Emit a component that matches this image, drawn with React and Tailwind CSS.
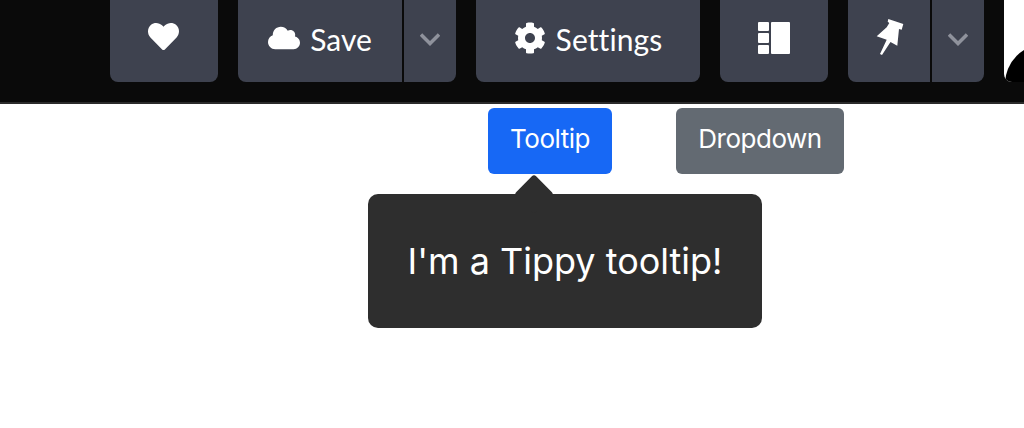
import React from "react";
import { FaHeart, FaCloud, FaCog } from "react-icons/fa";

const barBtn = "flex items-center justify-center h-full pb-1 bg-[#3e424f] text-white";

const Chevron = () => (
  <svg width="20" height="13" viewBox="0 0 20 13" fill="none" stroke="#8f929c" strokeWidth="3.5">
    <path d="M1 1.5 10 10.5 19 1.5" />
  </svg>
);

const PanelIcon = () => (
  <svg className="mb-[2px]" width="32" height="32" viewBox="0 0 32 32" fill="white">
    <rect x="0" y="0" width="11" height="9" rx="1" />
    <rect x="0" y="11" width="11" height="10" rx="1" />
    <rect x="0" y="23" width="11" height="9" rx="1" />
    <rect x="13" y="0" width="19" height="32" rx="1" />
  </svg>
);

const PinIcon = () => (
  <svg className="ml-[3px] mb-[4px]" width="30" height="40" viewBox="36 18 30 40" fill="white">
    <path d="M48.3 20 63.3 25 61.7 30.7 59 30 57.3 46.7 50.5 43 42 56 40 55 46.7 40.7 36.7 37.3 46.7 28.3 49.3 24 47.7 22.7Z" />
  </svg>
);

const App = () => {
  return (
    <div className="h-[428px] bg-white overflow-hidden font-['Lato',sans-serif]">
      <header className="flex h-[104px] bg-[#0a0a0a] border-b-2 border-[#2b2b2b] pb-5 pl-[110px] gap-5">
        <button className={`${barBtn} w-[108px] rounded-b-lg`}>
          <FaHeart className="text-[31px] mb-[5px] mr-[2px]" />
        </button>
        <div className="flex h-full w-[218px] rounded-b-lg overflow-hidden">
          <button className={`${barBtn} flex-1 gap-[10px] text-[30px]`}>
            <FaCloud className="text-[32px] mb-[2px]" />
            Save
          </button>
          <div className="w-[2px] bg-[#0a0a0a]" />
          <button className={`${barBtn} w-[52px]`}>
            <Chevron />
          </button>
        </div>
        <button className={`${barBtn} w-[224px] rounded-b-lg gap-[10px] text-[30px] tracking-[0.1px]`}>
          <FaCog className="text-[32px] mb-[2px]" />
          Settings
        </button>
        <button className={`${barBtn} w-[108px] rounded-b-lg`}>
          <PanelIcon />
        </button>
        <div className="flex h-full w-[136px] rounded-b-lg overflow-hidden">
          <button className={`${barBtn} flex-1`}>
            <PinIcon />
          </button>
          <div className="w-[2px] bg-[#0a0a0a]" />
          <button className={`${barBtn} w-[52px]`}>
            <Chevron />
          </button>
        </div>
        <div className="relative flex-1 h-full bg-white rounded-bl-lg overflow-hidden">
          <div className="absolute left-[1px] top-[44px] w-20 h-20 rounded-full bg-black" />
        </div>
      </header>
      <main className="relative font-['Inter',sans-serif]">
        <div className="flex pt-1 pl-[488px] gap-[64px]">
          <button className="w-[124px] h-[66px] pb-[6px] rounded-md bg-[#1768f5] text-white text-[26px] tracking-[-0.5px]">Tooltip</button>
          <button className="w-[168px] h-[66px] pb-[6px] rounded-md bg-[#636a72] text-white text-[26px] tracking-[-0.5px]">Dropdown</button>
        </div>
        <div className="absolute left-[368px] top-[90px] flex items-center justify-center w-[394px] h-[134px] rounded-[10px] bg-[#2e2e2e] text-white text-[36px]">
          <div className="absolute left-[152px] -top-[14px] w-7 h-7 rotate-45 rounded-[3px] bg-[#2e2e2e]" />
          I'm a Tippy tooltip!
        </div>
      </main>
    </div>
  );
};

export default App;
